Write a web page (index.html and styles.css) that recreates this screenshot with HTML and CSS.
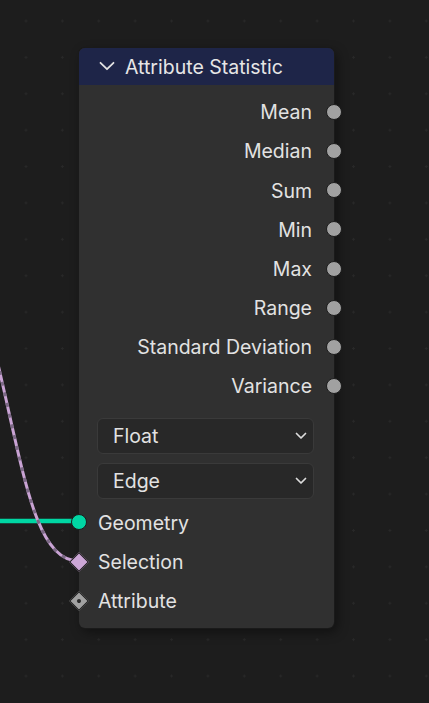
FILE: index.html
```html
<!DOCTYPE html>
<html>
<head>
<meta charset="utf-8">
<link rel="stylesheet" href="styles.css">
</head>
<body>
<div class="canvas">
  <svg class="links" width="429" height="703" viewBox="0 0 429 703">
    <line x1="0" y1="521" x2="79" y2="521" class="link-geo"/>
    <path d="M -3,360 C 24,474 35,561 79,561" class="link-sel"/>
    <path d="M -3,360 C 24,474 35,561 79,561" class="link-sel-dash"/>
  </svg>
  <div class="node">
    <div class="node-header">
      <svg class="collapse" width="16" height="10" viewBox="0 0 16 10"><path d="M1.5 1.8 L8 8.2 L14.5 1.8" fill="none" stroke="#e2e2e2" stroke-width="1.8" stroke-linecap="round" stroke-linejoin="round"/></svg>
      <span class="title">Attribute Statistic</span>
    </div>
    <div class="node-body">
      <div class="row out">Mean<span class="sock sock-float"></span></div>
      <div class="row out">Median<span class="sock sock-float"></span></div>
      <div class="row out">Sum<span class="sock sock-float"></span></div>
      <div class="row out">Min<span class="sock sock-float"></span></div>
      <div class="row out">Max<span class="sock sock-float"></span></div>
      <div class="row out">Range<span class="sock sock-float"></span></div>
      <div class="row out">Standard Deviation<span class="sock sock-float"></span></div>
      <div class="row out">Variance<span class="sock sock-float"></span></div>
      <div class="dropdowns">
        <div class="dropdown"><span class="dd-label">Float</span><svg width="12" height="8" viewBox="0 0 12 8"><path d="M1.5 1.5 L6 6 L10.5 1.5" fill="none" stroke="#dcdcdc" stroke-width="1.7" stroke-linecap="round" stroke-linejoin="round"/></svg></div>
        <div class="dropdown"><span class="dd-label">Edge</span><svg width="12" height="8" viewBox="0 0 12 8"><path d="M1.5 1.5 L6 6 L10.5 1.5" fill="none" stroke="#dcdcdc" stroke-width="1.7" stroke-linecap="round" stroke-linejoin="round"/></svg></div>
      </div>
      <div class="row in"><span class="sock sock-geo"></span>Geometry</div>
      <div class="row in"><span class="sock sock-diamond sock-bool"></span>Selection</div>
      <div class="row in"><span class="sock sock-diamond sock-attr"><span class="dot"></span></span>Attribute</div>
    </div>
  </div>
</div>
</body>
</html>
```
FILE: styles.css
```css
html, body {
  margin: 0;
  padding: 0;
  background: #1d1d1d;
}
.canvas {
  position: relative;
  width: 429px;
  height: 703px;
  overflow: hidden;
  background-color: #1d1d1d;
  background-image: radial-gradient(circle, #282828 1.1px, transparent 1.4px);
  background-size: 36.4px 36.4px;
  background-position: 7.8px 2.8px;
  font-family: Inter, "Noto Sans", sans-serif;
  font-size: 19.5px;
  color: #e2e2e2;
}
.links {
  position: absolute;
  left: 0;
  top: 0;
}
.link-geo {
  stroke: #00d6a3;
  stroke-width: 4.5;
}
.link-sel {
  fill: none;
  stroke: #c9a3d4;
  stroke-width: 3;
}
.link-sel-dash {
  fill: none;
  stroke: #6f5f78;
  stroke-width: 3;
  stroke-dasharray: 4 7;
  opacity: 0.85;
}
.node {
  position: absolute;
  left: 79px;
  top: 48px;
  width: 255px;
  height: 580px;
  background: #303030;
  border-radius: 6px;
  box-shadow: 0 0 0 1px #1a1a1a, 3px 4px 12px rgba(0,0,0,0.45);
  display: flex;
  flex-direction: column;
}
.node-header {
  height: 37px;
  background: #1e2548;
  border-radius: 6px 6px 0 0;
  display: flex;
  align-items: center;
  padding-left: 20px;
  gap: 10px;
  color: #e6e6e6;
  flex-shrink: 0;
}
.collapse {
  margin-top: -2px;
}
.title {
  line-height: 1;
  padding-top: 2px;
}
.node-body {
  padding-top: 7.5px;
  display: flex;
  flex-direction: column;
}
.row {
  position: relative;
  height: 39.15px;
  box-sizing: border-box;
  padding-top: 2px;
  display: flex;
  align-items: center;
  line-height: 1;
}
.row.out {
  justify-content: flex-end;
  padding-right: 22px;
}
.row.in {
  padding-left: 19px;
}
.sock {
  position: absolute;
  box-sizing: border-box;
  top: 50%;
}
.sock-float {
  width: 16px;
  height: 16px;
  right: -8px;
  margin-top: -8px;
  border-radius: 50%;
  background: #a1a1a1;
  border: 1.5px solid #1c1c1c;
}
.sock-geo {
  width: 16.5px;
  height: 16.5px;
  left: -8.25px;
  margin-top: -8.75px;
  border-radius: 50%;
  background: #00d6a3;
  border: 1.5px solid #1c1c1c;
}
.sock-diamond {
  width: 14px;
  height: 14px;
  left: -7px;
  margin-top: -7px;
  transform: rotate(45deg);
  border: 1.5px solid #1c1c1c;
  display: flex;
  align-items: center;
  justify-content: center;
}
.sock-bool {
  background: #cca6d6;
}
.sock-attr {
  background: #a1a1a1;
}
.sock-attr .dot {
  width: 4px;
  height: 4px;
  background: #2a2a2a;
  border-radius: 50%;
}
.dropdowns {
  display: flex;
  flex-direction: column;
  gap: 9px;
  padding: 12.5px 20px 4px 18px;
}
.dropdown {
  height: 36px;
  box-sizing: border-box;
  background: #282828;
  border: 1px solid #3a3a3a;
  border-radius: 6px;
  display: flex;
  align-items: center;
  justify-content: space-between;
  padding: 0 6px 0 15px;
  color: #e2e2e2;
  line-height: 1;
}
.dd-label {
  padding-top: 2px;
}
```
